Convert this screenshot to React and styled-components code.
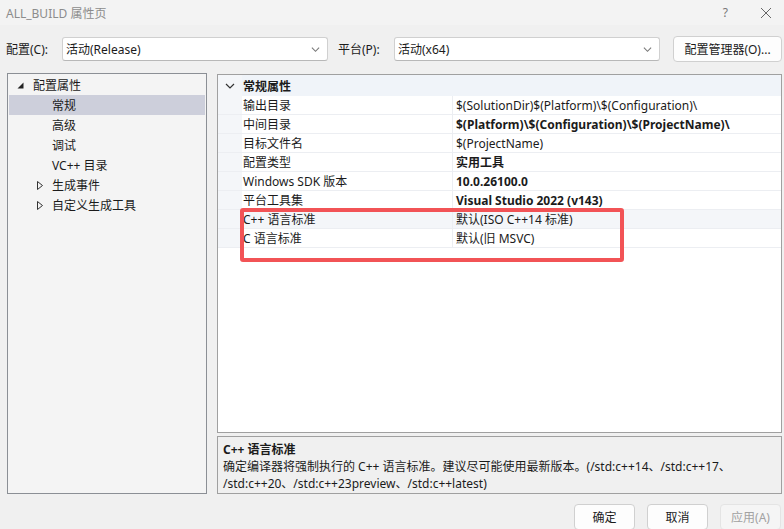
import React from 'react';
import styled, { createGlobalStyle } from 'styled-components';

const GlobalStyle = createGlobalStyle`
  html, body {
    margin: 0;
    padding: 0;
    background: #f0f0f0;
  }
  * {
    box-sizing: border-box;
  }
`;

const FONT = `"Noto Sans", "Noto Sans CJK SC", sans-serif`;

const tree = [
  { label: '配置属性', level: 0, mark: 'open' },
  { label: '常规', level: 1, selected: true },
  { label: '高级', level: 1 },
  { label: '调试', level: 1 },
  { label: 'VC++ 目录', level: 1 },
  { label: '生成事件', level: 1, mark: 'closed' },
  { label: '自定义生成工具', level: 1, mark: 'closed' },
];

const props = [
  { name: '输出目录', value: '$(SolutionDir)$(Platform)\\$(Configuration)\\' },
  { name: '中间目录', value: '$(Platform)\\$(Configuration)\\$(ProjectName)\\', bold: true },
  { name: '目标文件名', value: '$(ProjectName)' },
  { name: '配置类型', value: '实用工具', bold: true },
  { name: 'Windows SDK 版本', value: '10.0.26100.0', bold: true },
  { name: '平台工具集', value: 'Visual Studio 2022 (v143)', bold: true },
  { name: 'C++ 语言标准', value: '默认(ISO C++14 标准)', active: true },
  { name: 'C 语言标准', value: '默认(旧 MSVC)' },
];

const Chevron = ({ size = 9, color = '#555' }) => (
  <svg width={size} height={size} viewBox="0 0 10 10">
    <path d="M1 3 L5 7 L9 3" fill="none" stroke={color} strokeWidth="1.2" />
  </svg>
);

const TreeMark = ({ type }) =>
  type === 'open' ? (
    <svg width="7" height="7" viewBox="0 0 7 7">
      <path d="M6.5 0.5 L6.5 6.5 L0.5 6.5 Z" fill="#222" />
    </svg>
  ) : (
    <svg width="6" height="9" viewBox="0 0 6 9">
      <path d="M0.5 0.5 L5.5 4.5 L0.5 8.5 Z" fill="none" stroke="#333" strokeWidth="1" />
    </svg>
  );

export default function App() {
  return (
    <>
      <GlobalStyle />
      <Window>
        <TitleBar>
          <TitleText>ALL_BUILD 属性页</TitleText>
          <TitleControls>
            <TitleGlyph>?</TitleGlyph>
            <svg width="12" height="12" viewBox="0 0 12 12">
              <path d="M1 1 L11 11 M11 1 L1 11" stroke="#666" strokeWidth="1" />
            </svg>
          </TitleControls>
        </TitleBar>

        <TopRow>
          <FieldLabel>配置(C):</FieldLabel>
          <Combo>
            <span>活动(Release)</span>
            <Chevron color="#777" />
          </Combo>
          <FieldLabel $left={10}>平台(P):</FieldLabel>
          <Combo>
            <span>活动(x64)</span>
            <Chevron color="#777" />
          </Combo>
          <Button $wide>配置管理器(O)...</Button>
        </TopRow>

        <Main>
          <TreePanel>
            {tree.map((t) => (
              <TreeRow key={t.label} $selected={t.selected}>
                <MarkSlot $level={t.level}>{t.mark && <TreeMark type={t.mark} />}</MarkSlot>
                <span>{t.label}</span>
              </TreeRow>
            ))}
          </TreePanel>

          <RightColumn>
            <Grid>
              <Category>
                <Gutter>
                  <Chevron size={10} color="#333" />
                </Gutter>
                <CategoryName>常规属性</CategoryName>
              </Category>
              {props.map((p) => (
                <PropRow key={p.name} $active={p.active}>
                  <Gutter />
                  <PropName>{p.name}</PropName>
                  <PropValue $bold={p.bold}>{p.value}</PropValue>
                </PropRow>
              ))}
              <Highlight />
            </Grid>

            <Description>
              <DescTitle>C++ 语言标准</DescTitle>
              <DescText>
                确定编译器将强制执行的 C++ 语言标准。建议尽可能使用最新版本。(/std:c++14、/std:c++17、
                <br />
                /std:c++20、/std:c++23preview、/std:c++latest)
              </DescText>
            </Description>
          </RightColumn>
        </Main>

        <Footer>
          <Button>确定</Button>
          <Button>取消</Button>
          <Button $disabled>应用(A)</Button>
        </Footer>
      </Window>
    </>
  );
}

const Window = styled.div`
  width: 784px;
  height: 529px;
  overflow: hidden;
  display: flex;
  flex-direction: column;
  background: #f0f0f0;
  font-family: ${FONT};
  font-size: 12px;
  color: #1b1b1b;
`;

const TitleBar = styled.div`
  height: 25px;
  flex: none;
  display: flex;
  align-items: center;
  justify-content: space-between;
  padding: 0 12px 0 6px;
  background: #f3f3f3;
`;

const TitleText = styled.span`
  color: #8c8c8c;
  font-size: 12px;
`;

const TitleControls = styled.div`
  display: flex;
  align-items: center;
  gap: 32px;
`;

const TitleGlyph = styled.span`
  color: #777;
  font-size: 12px;
`;

const TopRow = styled.div`
  display: flex;
  align-items: center;
  height: 26px;
  margin-top: 11px;
  padding: 0 3px 0 6px;
`;

const FieldLabel = styled.span`
  width: 56px;
  flex: none;
  margin-left: ${(p) => p.$left || 0}px;
`;

const Combo = styled.div`
  width: 266px;
  height: 24px;
  flex: none;
  display: flex;
  align-items: center;
  justify-content: space-between;
  padding: 0 7px 0 3px;
  background: #fff;
  border: 1px solid #d0d0d0;
  border-bottom-color: #b8b8b8;
  border-radius: 3px;
`;

const Button = styled.div`
  width: ${(p) => (p.$wide ? '109px' : '61px')};
  height: 26px;
  flex: none;
  margin-left: ${(p) => (p.$wide ? '13px' : '0')};
  display: flex;
  align-items: center;
  justify-content: center;
  border: 1px solid ${(p) => (p.$disabled ? '#e4e4e4' : '#d0d0d0')};
  border-radius: 4px;
  background: ${(p) => (p.$disabled ? '#f5f5f5' : '#fdfdfd')};
  color: ${(p) => (p.$disabled ? '#a2a2a2' : '#1b1b1b')};
`;

const Main = styled.div`
  display: flex;
  gap: 10px;
  margin-top: 11px;
  padding: 0 2px 0 7px;
`;

const TreePanel = styled.div`
  width: 200px;
  height: 421px;
  flex: none;
  padding: 1px;
  background: #f4f4f4;
  border: 1px solid #8b8f95;
`;

const TreeRow = styled.div`
  height: 20px;
  display: flex;
  align-items: center;
  background: ${(p) => (p.$selected ? '#cdcfdb' : 'transparent')};
`;

const MarkSlot = styled.span`
  width: ${(p) => 24 + p.$level * 19}px;
  flex: none;
  display: flex;
  justify-content: flex-end;
  padding-right: 9px;
`;

const RightColumn = styled.div`
  flex: 1;
  display: flex;
  flex-direction: column;
  gap: 3px;
  padding-top: 1px;
`;

const Grid = styled.div`
  position: relative;
  height: 359px;
  background: #fff;
  border: 1px solid #a0a0a0;
`;

const Category = styled.div`
  height: 21px;
  display: flex;
  align-items: center;
  background: #f0f4f9;
`;

const Gutter = styled.div`
  width: 24px;
  align-self: stretch;
  flex: none;
  display: flex;
  align-items: center;
  justify-content: center;
  background: #f4f6f9;
`;

const CategoryName = styled.span`
  padding-left: 1px;
  font-weight: bold;
`;

const PropRow = styled.div`
  height: 19px;
  display: flex;
  align-items: stretch;
  border-bottom: 1px solid #eceef2;
  background: ${(p) => (p.$active ? '#f4f6f9' : '#fff')};
`;

const PropName = styled.div`
  width: 211px;
  flex: none;
  display: flex;
  align-items: center;
  padding-left: 1px;
  border-right: 1px solid #eceef2;
`;

const PropValue = styled.div`
  flex: 1;
  display: flex;
  align-items: center;
  padding-left: 3px;
  font-weight: ${(p) => (p.$bold ? 'bold' : 'normal')};
  white-space: nowrap;
`;

const Highlight = styled.div`
  position: absolute;
  left: 22px;
  top: 133px;
  width: 384px;
  height: 54px;
  border: 4px solid #f25356;
  border-radius: 3px;
  pointer-events: none;
`;

const Description = styled.div`
  height: 58px;
  padding: 4px 5px;
  background: #f0f0f0;
  border: 1px solid #a0a0a0;
  line-height: 17px;
`;

const DescTitle = styled.div`
  font-weight: bold;
`;

const DescText = styled.div`
  white-space: nowrap;
`;

const Footer = styled.div`
  display: flex;
  justify-content: flex-end;
  gap: 12px;
  margin-top: 10px;
  padding-right: 3px;
`;
